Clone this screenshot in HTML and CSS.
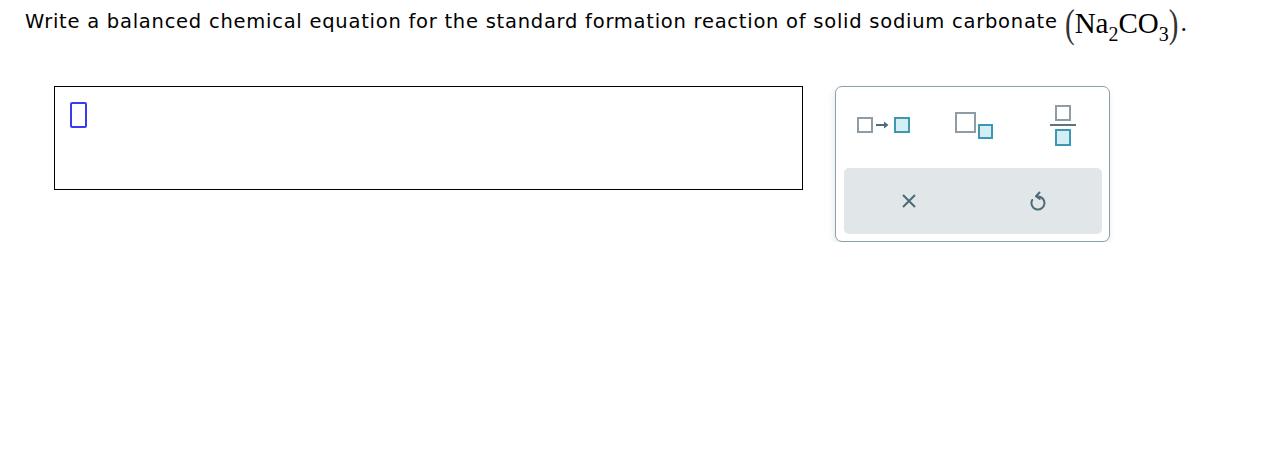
FILE: index.html
```html
<!DOCTYPE html>
<html lang="en">
<head>
<meta charset="utf-8">
<title>Formation reaction</title>
<link rel="stylesheet" href="styles.css">
</head>
<body>
<div class="question">
  <span class="prompt">Write a balanced chemical equation for the standard formation reaction of solid sodium carbonate</span>
  <span class="math"><span class="paren">(</span>Na<sub>2</sub>CO<sub>3</sub><span class="paren">)</span></span><span class="dot">.</span>
</div>
<div class="work">
  <div class="answer">
    <span class="cursor"></span>
  </div>
  <div class="palette">
    <div class="tools">
      <button class="tool" type="button" aria-label="reaction arrow">
        <svg width="54" height="16" viewBox="0 0 54 16">
          <rect x="1" y="1" width="14" height="14" fill="#fff" stroke="#8d9ca5" stroke-width="2"/>
          <line x1="19" y1="8" x2="28" y2="8" stroke="#4f6d79" stroke-width="2"/>
          <polygon points="27,4.5 31.5,8 27,11.5" fill="#4f6d79"/>
          <rect x="38" y="1" width="14" height="14" fill="#d5eef4" stroke="#3c97b2" stroke-width="2"/>
        </svg>
      </button>
      <button class="tool" type="button" aria-label="subscript">
        <svg width="38" height="27" viewBox="0 0 38 27">
          <rect x="1" y="1" width="19" height="19" fill="#fff" stroke="#8d9ca5" stroke-width="2"/>
          <rect x="24" y="13" width="13" height="13" fill="#d5eef4" stroke="#3c97b2" stroke-width="2"/>
        </svg>
      </button>
      <button class="tool" type="button" aria-label="fraction">
        <svg width="26" height="41" viewBox="0 0 26 41">
          <rect x="6" y="1" width="14" height="14" fill="#fff" stroke="#8d9ca5" stroke-width="2"/>
          <line x1="0" y1="20" x2="26" y2="20" stroke="#5a7480" stroke-width="2"/>
          <rect x="6" y="25" width="14" height="15" fill="#d5eef4" stroke="#3c97b2" stroke-width="2"/>
        </svg>
      </button>
    </div>
    <div class="actions">
      <button class="action" type="button" aria-label="clear">
        <svg width="16" height="16" viewBox="0 0 16 16">
          <path d="M2 2 L14 14 M14 2 L2 14" stroke="#4d6a77" stroke-width="2" fill="none"/>
        </svg>
      </button>
      <button class="action" type="button" aria-label="undo">
        <svg width="18" height="20" viewBox="0 0 18 20">
          <path d="M8.5 5.5 A6.5 6.5 0 1 1 3.2 9" stroke="#4d6a77" stroke-width="2" fill="none" stroke-linecap="round"/>
          <path d="M10.5 1.5 L7 5.2 L10.8 8" stroke="#4d6a77" stroke-width="2" fill="none" stroke-linecap="round" stroke-linejoin="round"/>
        </svg>
      </button>
    </div>
  </div>
</div>
</body>
</html>
```
FILE: styles.css
```css
html, body {
  margin: 0;
  padding: 0;
  background: #fff;
}
body {
  font-family: "DejaVu Sans", Verdana, sans-serif;
  color: #000;
}
.question {
  padding: 0 0 0 25px;
  height: 44px;
  font-size: 19.5px;
  line-height: 44px;
  white-space: nowrap;
}
.prompt {
  letter-spacing: 0.75px;
}
.math {
  font-family: "Liberation Serif", "Times New Roman", serif;
  font-size: 29px;
  line-height: 1;
  vertical-align: -5px;
  margin-left: 1px;
}
.math sub {
  font-size: 20px;
  vertical-align: -8px;
  line-height: 0;
}
.paren {
  display: inline-block;
  font-size: 29px;
  transform: scaleY(1.4);
  color: #333;
}
.dot {
  font-family: "Liberation Serif", serif;
  font-size: 26px;
  vertical-align: -3px;
  margin-left: 2px;
}
.work {
  display: flex;
  align-items: flex-start;
  gap: 32px;
  padding-left: 54px;
  margin-top: 42px;
}
.answer {
  box-sizing: border-box;
  width: 749px;
  height: 104px;
  border: 1px solid #000;
  padding: 15px 0 0 15px;
}
.cursor {
  display: block;
  box-sizing: border-box;
  width: 17px;
  height: 26px;
  border: 2px solid #3a3af5;
  border-radius: 2px;
}
.palette {
  box-sizing: border-box;
  width: 275px;
  height: 156px;
  border: 1px solid #8aa0aa;
  border-radius: 7px;
  box-shadow: -1px 3px 6px rgba(60, 80, 90, 0.14);
  padding: 0 7px 7px 8px;
  background: #fff;
}
.tools {
  display: grid;
  grid-template-columns: 80px 100px 1fr;
  height: 76px;
  margin-bottom: 5px;
}
.tool, .action {
  border: 0;
  background: transparent;
  padding: 0;
  display: flex;
  align-items: center;
  justify-content: center;
}
.actions {
  display: flex;
  height: 66px;
  background: #e1e6e9;
  border-radius: 5px;
}
.action {
  flex: 1;
}
```
